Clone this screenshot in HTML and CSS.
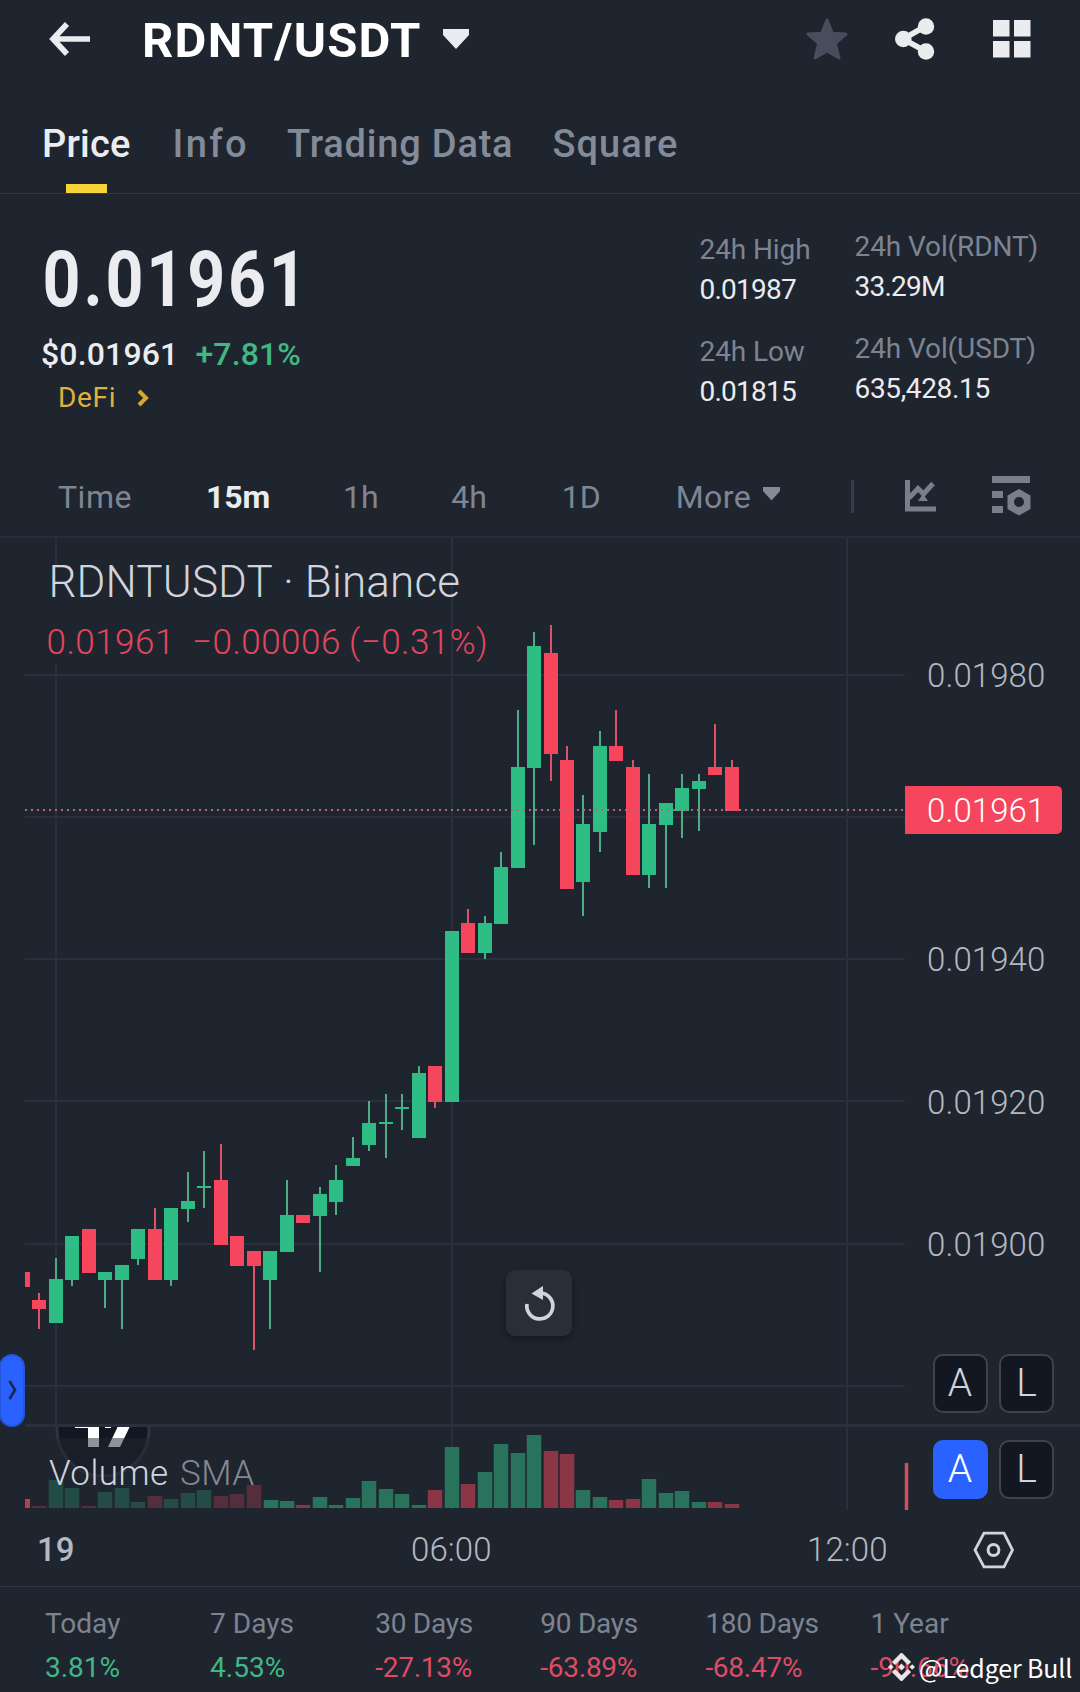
FILE: index.html
```
<!DOCTYPE html>
<html lang="en">
<head>
<meta charset="utf-8">
<title>RDNT/USDT</title>
<link rel="stylesheet" href="styles.css">
</head>
<body>
<header class="topbar">
  <svg class="back" width="42" height="36" viewBox="0 0 42 36"><path d="M41 18H5M18 3L4 18L18 33" fill="none" stroke="#eaecef" stroke-width="5.6"/></svg>
  <h1 class="pair">RDNT/USDT</h1>
  <svg class="pair-caret" width="26" height="20" viewBox="0 0 26 20"><path d="M0 0H26V6L13 20L0 6Z" fill="#eaecef"/></svg>
  <div class="actions">
    <svg width="42" height="42" viewBox="0 0 42 42"><path d="M21 2L26.2 15.2L40 16L29.3 25.4L33 40L21 33L9 40L12.700 25.400L2 16L15.800 15.200Z" fill="#474d5c" stroke="#474d5c" stroke-width="3" stroke-linejoin="round"/></svg>
    <svg width="40" height="42" viewBox="0 0 40 42"><path d="M31 8L8 21L31 33.500" fill="none" stroke="#eaecef" stroke-width="5.500"/><g fill="#eaecef"><circle cx="8.300" cy="21" r="8.300"/><circle cx="31" cy="8.500" r="8.200"/><circle cx="31" cy="33.500" r="8.200"/></g></svg>
    <svg width="38" height="38" viewBox="0 0 38 38"><path d="M0 0H16.500V16.500H0ZM21 0H37.500V16.500H21ZM0 21H16.500V37.500H0ZM21 21H37.500V37.500H21Z" fill="#eaecef"/></svg>
  </div>
</header>
<nav class="tabs">
  <a class="tab active">Price</a><a class="tab info">Info</a><a class="tab trading">Trading Data</a><a class="tab square">Square</a>
</nav>
<section class="quote">
  <div class="last">
    <div class="price">0.01961</div>
    <div class="sub"><span>$0.01961</span><span class="up">+7.81%</span></div>
    <div class="tag">DeFi<svg width="12" height="18" viewBox="0 0 12 18"><path d="M2 2L9 9L2 16" fill="none" stroke="#dba62c" stroke-width="4"/></svg></div>
  </div>
  <dl class="stats">
    <dt>24h High</dt><dd>0.01987</dd>
    <dt>24h Low</dt><dd>0.01815</dd>
  </dl>
  <dl class="stats volume">
    <dt>24h Vol(RDNT)</dt><dd>33.29M</dd>
    <dt>24h Vol(USDT)</dt><dd class="quote-vol">635,428.15</dd>
  </dl>
</section>
<nav class="frames">
  <span class="time">Time</span><span class="on">15m</span><span>1h</span><span>4h</span><span>1D</span>
  <span class="more">More<svg width="17" height="14" viewBox="0 0 17 14"><path d="M0 0H17V4L8.500 13.500L0 4Z" fill="#848b98"/></svg></span>
  <i class="sep"></i>
  <svg class="ind" width="31" height="32" viewBox="0 0 31 32"><path d="M2.500 0V29H31M4 18L13 8.500L18.500 14L28 3.500" fill="none" stroke="#787e8b" stroke-width="5"/><path d="M18 14L23 21H13Z" fill="#787e8b"/></svg>
  <svg width="39" height="40" viewBox="0 0 39 40"><path d="M0 0H38V7H0ZM0 15H11V22H0ZM0 30H11V37H0ZM27 13L38.500 19.500V33L27 39.500L15.500 33V19.500Z" fill="#787e8b"/><circle cx="27" cy="26" r="5" fill="#1f252f"/></svg>
</nav>
<main class="chart">
<svg width="1080" height="1048" viewBox="0 538 1080 1048">
  <!-- grid -->
  <g stroke="#2a303b" stroke-width="2">
    <path d="M25 675H905M25 817H905M25 959H905M25 1101H905M25 1244H905M25 1386H905"/>
    <path d="M56 538V565M56 664V1425M452 538V1510M847 538V1510"/>
    <path d="M25 1425.500H1080" stroke-width="3"/>
  </g>
  <!-- candle wicks -->
  <path stroke="#4fac86" stroke-width="2" d="M56 1258V1279M72 1280V1286M105 1280V1308M122 1280V1329M138 1259V1265M171 1280V1286M188 1172V1222M204 1151V1208M270 1280V1329M287 1180V1215M320 1187V1272M336 1165V1215M353 1137V1158M369 1101V1151M386 1094V1158M402 1094V1130M419 1066V1073M485 916V959M501 852V867M518 710V767M534 632V845M583 795V916M600 731V852M649 774V888M666 825V888M682 774V838M699 774V831"/>
  <path stroke="#dc5267" stroke-width="2" d="M39 1293V1329M155 1208V1229M221 1144V1180M254 1266V1350M435 1102V1108M468 909V923M551 625V781M567 746V760M616 710V746M633 760V767M715 724V767M732 760V767"/>
  <!-- candle bodies -->
  <path stroke="#2ebd85" stroke-width="14" d="M56 1279V1323M72 1236V1280M105 1272V1280M122 1265V1280M138 1229V1259M171 1208V1280M188 1201V1209M204 1186V1188M270 1251V1280M287 1215V1252M320 1194V1216M336 1180V1202M353 1158V1166M369 1123V1145M386 1122V1124M402 1107V1109M419 1073V1138M452 931V1102M485 923V953M501 867V924M518 767V868M534 646V768M583 824V882M600 746V832M649 824V875M666 803V825M682 788V811M699 781V789"/>
  <path stroke="#f6465d" stroke-width="14" d="M39 1300V1309M89 1229V1273M155 1229V1280M221 1180V1245M237 1236V1266M254 1251V1266M303 1215V1223M435 1066V1102M468 923V953M551 653V754M567 760V889M616 746V761M633 767V875M715 767V775M732 767V811"/>
  <path fill="#f6465d" d="M25 1272h5v15h-5z"/>
  <!-- last price -->
  <path d="M25 810H905" stroke="#b8667a" stroke-width="2" stroke-dasharray="2 4"/>
  <path d="M905 786H1057a5 5 0 0 1 5 5V829a5 5 0 0 1 -5 5H905Z" fill="#f6465d"/>
  <g class="scale">
    <text x="927" y="687">0.01980</text><text x="927" y="971">0.01940</text><text x="927" y="1114">0.01920</text><text x="927" y="1256">0.01900</text>
    <text class="white" x="927" y="822">0.01961</text>
    <text x="411" y="1561">06:00</text><text x="807" y="1561">12:00</text><text class="day" x="37" y="1561">19</text>
  </g>
  <text class="symbol" x="48.500" y="597">RDNTUSDT · Binance</text>
  <g class="change"><text x="46.500" y="653.500">0.01961</text><text x="192" y="653.500">−0.00006</text><text x="349" y="653.500">(−0.31%)</text></g>
  <!-- attribution badge, cut by the pane edge -->
  <svg x="50" y="1427" width="110" height="60" viewBox="50 1427 110 60">
    <circle cx="103" cy="1430" r="46" fill="#131722" stroke="#30343f" stroke-width="3"/>
    <path d="M75 1424H99V1447H88V1428H75ZM119 1424H131L120 1447H108ZM105 1424H111V1428H105Z" fill="#fff"/>
  </svg>
  <!-- volume -->
  <path stroke="#29735c" stroke-width="14.500" d="M56 1480V1508M72 1488V1508M105 1492V1508M122 1488V1508M138 1502V1508M171 1499V1508M188 1493V1508M204 1490V1508M271 1500V1508M287 1501V1508M320 1497V1508M336 1505V1508M353 1498V1508M369 1481V1508M386 1489V1508M402 1494V1508M419 1505V1508M452 1447V1508M485 1472V1508M501 1444V1508M518 1453V1508M534 1435V1508M583 1490V1508M600 1497V1508M649 1479V1508M666 1493V1508M682 1491V1508M699 1502V1508"/>
  <path stroke="#8a3646" stroke-width="14.500" d="M39 1506V1508M89 1506V1508M155 1496V1508M221 1496V1508M237 1494V1508M254 1485V1508M303 1505V1508M435 1490V1508M468 1484V1508M551 1451V1508M567 1454V1508M616 1500V1508M633 1499V1508M715 1502V1508M732 1504V1508"/>
  <path fill="#b03f50" d="M25 1499h5v9h-5z"/>
  <path fill="#1f252f" fill-opacity=".5" d="M32 1438h230v72h-230z"/>
  <text class="legend" x="49" y="1484.700">Volume</text><text class="legend dim" x="180" y="1484.700">SMA</text>
  <path d="M906.500 1463V1510" stroke="#cf5062" stroke-width="3.500"/>
  <!-- scale mode buttons -->
  <g fill="#131722" stroke="#3f434e" stroke-width="2"><rect x="934" y="1355" width="53" height="57" rx="9"/><rect x="1000" y="1355" width="53" height="57" rx="9"/><rect x="1000" y="1441" width="53" height="57" rx="9"/></g>
  <rect x="933" y="1440" width="55" height="59" rx="10" fill="#2962ff"/>
  <g class="mode"><text x="960" y="1396">A</text><text x="1026.500" y="1396">L</text><text class="white" x="960" y="1482">A</text><text x="1026.500" y="1482">L</text></g>
  <g fill="none" stroke="#d1d4dc"><path d="M984 1533.200H1004L1012.500 1550L1004 1566.800H984L975 1550Z" stroke-width="2.800"/><circle cx="993.500" cy="1550" r="5.400" stroke-width="3"/></g>
  <!-- drawing tools handle -->
  <rect x="0" y="1355" width="24" height="71" rx="12" fill="#2962ff" stroke="#2456d8" stroke-width="2"/>
  <path d="M9.500 1381L15 1390L9.500 1399" fill="none" stroke="#1b2a55" stroke-width="2.800"/>
  <!-- reset view -->
  <g class="reset"><rect x="506" y="1270" width="66" height="66" rx="9" fill="#2a2e39"/></g>
  <path d="M527 1304A13 13 0 1 0 541 1293" fill="none" stroke="#d1d4dc" stroke-width="3.700"/>
  <path d="M531.500 1293.500L543 1286V1300Z" fill="#d1d4dc"/>
</svg>
</main>
<footer class="perf">
  <div>Today<b class="up">3.81%</b></div>
  <div>7 Days<b class="up">4.53%</b></div>
  <div class="wide">30 Days<b class="down">-27.13%</b></div>
  <div class="wide">90 Days<b class="down">-63.89%</b></div>
  <div class="wide">180 Days<b class="down">-68.47%</b></div>
  <div>1 Year<b class="down">-90.66%</b></div>
  <div class="mark">
    <svg width="27" height="28" viewBox="0 0 27 28"><path d="M5.500 10.500L13.500 2.500L21.500 10.500M5.500 17.500L13.500 25.500L21.500 17.500" fill="none" stroke="#e9e6ea" stroke-width="4.500"/><path d="M13.500 10.500L17 14L13.500 17.500L10 14ZM2.800 11.200L5.600 14L2.800 16.800L0 14ZM24.200 11.200L27 14L24.200 16.800L21.400 14Z" fill="#e9e6ea"/></svg>
    <span>@Ledger Bull</span>
  </div>
</footer>
</body>
</html>
```
FILE: styles.css
```
* { box-sizing: border-box; }
body { margin: 0; width: 1080px; height: 1692px; overflow: hidden; background: #1f252f; color: #eaecef; font-family: Roboto, sans-serif; }
svg { display: block; flex: none; }
.topbar { display: flex; align-items: center; height: 77px; padding: 0 49px; }
.pair { margin: 4px 0 0 51px; font-size: 49px; font-weight: 700; line-height: 60px; letter-spacing: 1.2px; color: #fff; }
.pair-caret { margin-left: 21px; }
.actions { display: flex; align-items: center; gap: 47px; margin-left: auto; }
.actions svg:last-child { margin-left: 11px; }
.tabs { display: flex; height: 117px; padding-left: 42px; border-bottom: 1px solid #303742; font-size: 38px; font-weight: 500; line-height: 135px; color: #848b98; }
.tab { position: relative; white-space: nowrap; }
.tab.active { color: #eaecef; letter-spacing: .2px; }
.tab.active::after { content: ""; position: absolute; left: 24px; top: 107px; width: 41px; height: 9px; background: #f8d33a; }
.tab.info { margin-left: 42px; letter-spacing: 2.4px; }
.tab.trading { margin-left: 38px; letter-spacing: .8px; }
.tab.square { margin-left: 39px; letter-spacing: 1.1px; }
.quote { display: flex; height: 262px; padding: 33px 0 0 42px; }
.last { width: 657.5px; padding-top: 13px; }
.price { width: max-content; font-size: 78px; font-weight: 700; line-height: 80px; letter-spacing: 3.3px; transform: scaleX(.85); transform-origin: 4px 50%; }
.sub { display: flex; gap: 17px; margin: 10px 0 0 -1px; font-size: 32px; font-weight: 500; line-height: 48px; letter-spacing: .15px; }
.up { color: #3fb884; }
.down { color: #de4c62; }
.tag { display: flex; align-items: center; gap: 21px; padding-left: 16px; font-size: 28px; line-height: 40px; letter-spacing: .7px; color: #dfb13c; }
.stats { width: 155px; margin: 3px 0 0; font-size: 28px; line-height: 40px; white-space: nowrap; }
.stats.volume { width: 200px; margin-top: 0; }
.stats dt { letter-spacing: -.1px; color: #7d8491; }
.stats dd { margin: 0 0 22px; letter-spacing: -.75px; }
.stats dd.quote-vol { letter-spacing: -.35px; }
.frames { display: flex; align-items: center; height: 82px; padding-left: 58px; border-bottom: 2px solid #272d38; font-size: 32px; line-height: 40px; color: #7f8693; }
.frames span { margin-top: 1px; }
.frames .time { letter-spacing: .5px; }
.frames .on { margin: 1px 73px 0 74px; font-weight: 700; letter-spacing: -.1px; color: #eaecef; }
.frames span + span + span { margin-right: 75px; }
.frames span.on + span { margin-right: 72.500px; }
.frames span.more { display: flex; gap: 12px; margin-right: 71px; letter-spacing: .4px; }
.more svg { margin-top: 10px; }
.sep { width: 3px; height: 33px; background: #363c48; }
.ind { margin: 0 56px 0 51px; }
.chart { height: 1048px; }
.chart text { font-weight: 300; }
.scale { font-size: 33px; fill: #b4b8c1; letter-spacing: .1px; }
.chart .white { fill: #fff; }
.chart .day { font-weight: 500; }
.symbol { font-size: 44px; fill: #d1d4dc; letter-spacing: .15px; }
.change { font-size: 35px; fill: #e5465c; letter-spacing: .5px; }
.legend { font-size: 35px; fill: #d1d4dc; letter-spacing: .5px; }
.chart .dim { fill: #858893; }
.mode { font-size: 39px; fill: #d1d4dc; text-anchor: middle; }
.reset { filter: drop-shadow(0 3px 4px #12161e); }
.perf { position: relative; display: flex; height: 106px; padding: 15px 0 0 45px; border-top: 1px solid #303742; font-size: 28px; line-height: 44px; white-space: nowrap; color: #7d8491; }
.perf > div:not(.mark) { width: 165.1px; flex: none; }
.perf b { display: block; font-weight: 400; }
.perf .wide { letter-spacing: -.25px; }
.mark { position: absolute; left: 888px; top: 58px; display: flex; align-items: center; gap: 4px; font: 25px/44px "Noto Sans CJK SC", sans-serif; letter-spacing: -.15px; color: #fff; }
```
